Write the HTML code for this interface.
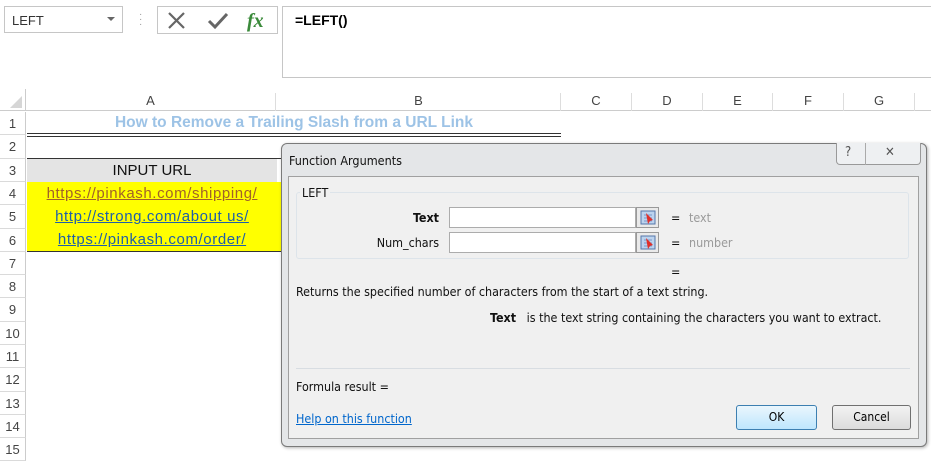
<!DOCTYPE html>
<html><head><meta charset="utf-8"><style>
*{margin:0;padding:0;box-sizing:border-box}
body{width:931px;height:457px;overflow:hidden;background:#fff;font-family:"Liberation Sans",sans-serif;position:relative}
.a{position:absolute}
.hd{position:absolute;font-size:13px;color:#444;text-align:center}
.rn{position:absolute;left:0;width:26px;text-align:center;font-size:13px;color:#444;border-bottom:1px solid #dadada;background:#fff;border-right:1px solid #ccc}
.d{font-family:"DejaVu Sans Condensed","Liberation Sans",sans-serif;font-size:12.4px;color:#111;position:absolute}
.inp{position:absolute;left:449px;width:187px;height:21px;background:#fff;border:1px solid #acacac}
.ib{position:absolute;left:636px;width:23px;height:21px;border:1px solid #999;background:#eaeaea}
.u{position:absolute;left:27px;width:250px;text-align:center;font-size:15px;letter-spacing:0.6px;text-decoration:underline}
</style></head><body>
<div class="a" style="left:0;top:0;width:931px;height:88px;background:#fff"></div>
<div class="a" style="left:4px;top:6px;width:119px;height:27px;border:1px solid #c6c6c6;font-size:13px;color:#333;padding:6px 7px">LEFT</div>
<div class="a" style="left:107px;top:17px;width:0;height:0;border-left:4px solid transparent;border-right:4px solid transparent;border-top:4px solid #666"></div>
<div class="a" style="left:139px;top:12px;color:#999;font-size:10px;line-height:5px">·<br>·<br>·</div>
<div class="a" style="left:157px;top:6px;width:121px;height:28px;border:1px solid #c6c6c6"></div>
<svg class="a" style="left:167px;top:10px" width="100" height="22"><path d="M2 3L17 18M17 3L2 18" stroke="#666" stroke-width="2.2"/><path d="M42 11L48 17L60 4" stroke="#666" stroke-width="3" fill="none"/><text x="80" y="17" font-family="Liberation Serif" font-style="italic" font-weight="bold" font-size="20" fill="#3a8a3a">fx</text></svg>
<div class="a" style="left:282px;top:6px;width:660px;height:72px;border:1px solid #c6c6c6;font-size:14px;font-weight:bold;padding:5px 12px">=LEFT()</div>
<div class="a" style="left:0;top:89px;width:931px;height:22px;background:#fff;border-bottom:1px solid #ccc"></div>
<div class="a" style="left:0;top:89px;width:26px;height:22px;border-right:1px solid #ccc"></div>
<div class="a" style="left:10px;top:96px;width:0;height:0;border-left:12px solid transparent;border-bottom:12px solid #d6d6d6"></div>
<div class="hd" style="left:26px;top:93px;width:250px;border-right:1px solid #ddd;height:18px">A</div>
<div class="hd" style="left:277px;top:93px;width:284px;border-right:1px solid #ddd;height:18px">B</div>
<div class="hd" style="left:561px;top:93px;width:71px;border-right:1px solid #ddd;height:18px">C</div>
<div class="hd" style="left:632px;top:93px;width:71px;border-right:1px solid #ddd;height:18px">D</div>
<div class="hd" style="left:703px;top:93px;width:70px;border-right:1px solid #ddd;height:18px">E</div>
<div class="hd" style="left:773px;top:93px;width:71px;border-right:1px solid #ddd;height:18px">F</div>
<div class="hd" style="left:844px;top:93px;width:71px;border-right:1px solid #ddd;height:18px">G</div>
<div class="rn" style="top:112px;height:23px;line-height:23px">1</div>
<div class="rn" style="top:135px;height:24px;line-height:24px">2</div>
<div class="rn" style="top:159px;height:23px;line-height:23px">3</div>
<div class="rn" style="top:182px;height:23px;line-height:23px">4</div>
<div class="rn" style="top:205px;height:24px;line-height:24px">5</div>
<div class="rn" style="top:229px;height:23px;line-height:23px">6</div>
<div class="rn" style="top:252px;height:23px;line-height:23px">7</div>
<div class="rn" style="top:275px;height:23px;line-height:23px">8</div>
<div class="rn" style="top:298px;height:24px;line-height:24px">9</div>
<div class="rn" style="top:322px;height:23px;line-height:23px">10</div>
<div class="rn" style="top:345px;height:23px;line-height:23px">11</div>
<div class="rn" style="top:368px;height:24px;line-height:24px">12</div>
<div class="rn" style="top:392px;height:23px;line-height:23px">13</div>
<div class="rn" style="top:415px;height:23px;line-height:23px">14</div>
<div class="rn" style="top:438px;height:23px;line-height:23px">15</div>
<div class="a" style="left:27px;top:114px;width:534px;text-align:center;font-size:15.5px;font-weight:bold;color:#9dc3e6">How to Remove a Trailing Slash from a URL Link</div>
<div class="a" style="left:27px;top:133px;width:534px;height:4px;border-top:1px solid #333;border-bottom:1px solid #333"></div>
<div class="a" style="left:27px;top:158px;width:260px;height:1px;background:#333"></div>
<div class="a" style="left:27px;top:159px;width:250px;height:23px;background:#e4e4e4;text-align:center;font-size:15px;line-height:24px;color:#111">INPUT URL</div>
<div class="a" style="left:27px;top:182px;width:255px;height:70px;background:#ffff00"></div>
<div class="u" style="top:185px;color:#a0622a">https://pinkash.com/shipping/</div>
<div class="u" style="top:208px;color:#1f5fa8">http://strong.com/about us/</div>
<div class="u" style="top:231px;color:#1f5fa8">https://pinkash.com/order/</div>
<div class="a" style="left:27px;top:251px;width:255px;height:1px;background:#333"></div>
<div class="a" style="left:281px;top:143px;width:646px;height:304px;background:#e4e6e8;border:1px solid #7a7a7a;border-radius:6px;box-shadow:1px 1px 3px rgba(0,0,0,.3)"></div>
<div class="d" style="left:289px;top:153px;font-size:12.5px">Function Arguments</div>
<div class="a" style="left:836px;top:143px;width:85px;height:22px;border:1px solid #999;border-top:none;border-radius:0 0 4px 4px;background:#eef0f2"></div>
<div class="a" style="left:865px;top:143px;width:1px;height:22px;background:#aaa"></div>
<div class="d" style="left:845px;top:145px;font-size:13px;color:#555">?</div>
<div class="d" style="left:885px;top:145px;font-size:13px;color:#555">✕</div>
<div class="a" style="left:288px;top:176px;width:631px;height:263px;background:#f0f0f0;border:1px solid #a0a0a0"></div>
<div class="a" style="left:296px;top:192px;width:613px;height:67px;border:1px solid #dde4ea;border-radius:3px"></div>
<div class="d" style="left:300px;top:185px;background:#f0f0f0;padding:0 2px">LEFT</div>
<div class="d" style="left:380px;top:210px;width:59px;text-align:right;font-weight:bold">Text</div>
<div class="d" style="left:360px;top:235px;width:79px;text-align:right">Num_chars</div>
<div class="inp" style="top:207px"></div><div class="ib" style="top:207px"></div>
<div class="inp" style="top:232px"></div><div class="ib" style="top:232px"></div>
<svg class="a" style="left:640px;top:210px" width="16" height="15"><rect x="1" y="1" width="14" height="13" fill="#bcd3ee" stroke="#5577aa"/><path d="M4 5h8M4 8h8M4 11h8" stroke="#7a9acc"/><path d="M6 3l7 7-3 1-2 3z" fill="#e0302a"/></svg>
<svg class="a" style="left:640px;top:235px" width="16" height="15"><rect x="1" y="1" width="14" height="13" fill="#bcd3ee" stroke="#5577aa"/><path d="M4 5h8M4 8h8M4 11h8" stroke="#7a9acc"/><path d="M6 3l7 7-3 1-2 3z" fill="#e0302a"/></svg>
<div class="d" style="left:671px;top:210px">=</div><div class="d" style="left:689px;top:210px;color:#9a9a9a">text</div>
<div class="d" style="left:671px;top:235px">=</div><div class="d" style="left:689px;top:235px;color:#9a9a9a">number</div>
<div class="d" style="left:671px;top:264px">=</div>
<div class="d" style="left:296px;top:284px">Returns the specified number of characters from the start of a text string.</div>
<div class="d" style="left:490px;top:310px"><b>Text</b>&nbsp;&nbsp; is the text string containing the characters you want to extract.</div>
<div class="a" style="left:296px;top:368px;width:614px;height:1px;background:#d8dde2"></div>
<div class="d" style="left:296px;top:379px">Formula result =</div>
<div class="d" style="left:296px;top:411px;color:#0066cc;text-decoration:underline">Help on this function</div>
<div class="a" style="left:736px;top:405px;width:81px;height:25px;border:1px solid #3c7fb1;border-radius:3px;background:linear-gradient(#eaf6fd,#bee6fd);text-align:center;font-size:12px;line-height:23px;font-family:'DejaVu Sans Condensed',sans-serif">OK</div>
<div class="a" style="left:832px;top:405px;width:79px;height:25px;border:1px solid #707070;border-radius:3px;background:linear-gradient(#f2f2f2,#dcdcdc);text-align:center;font-size:12px;line-height:23px;font-family:'DejaVu Sans Condensed',sans-serif">Cancel</div>
</body></html>
